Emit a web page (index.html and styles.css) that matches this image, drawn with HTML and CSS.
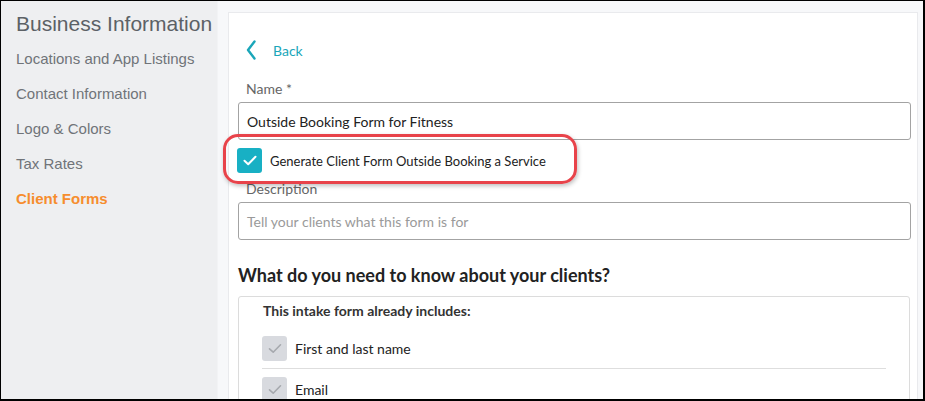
FILE: index.html
```html
<!DOCTYPE html>
<html>
<head>
<meta charset="utf-8">
<link rel="stylesheet" href="styles.css">
</head>
<body>
<div class="frame">
  <aside class="sidebar">
    <div class="side-title">Business Information</div>
    <nav class="side-nav">
      <div class="side-item">Locations and App Listings</div>
      <div class="side-item">Contact Information</div>
      <div class="side-item">Logo &amp; Colors</div>
      <div class="side-item">Tax Rates</div>
      <div class="side-item active">Client Forms</div>
    </nav>
  </aside>
  <main class="main">
    <div class="card">
      <div class="back-row">
        <svg class="chev" width="10" height="20" viewBox="0 0 10 20"><path d="M8.5 1.5 L2 10 L8.5 18.5" fill="none" stroke="#1aa6b9" stroke-width="2.4" stroke-linecap="round" stroke-linejoin="round"/></svg>
        <span class="back-text">Back</span>
      </div>
      <div class="label label-name">Name *</div>
      <div class="input">Outside Booking Form for Fitness</div>
      <div class="check-row">
        <span class="cb cb-on"><svg width="14" height="11" viewBox="0 0 14 11"><path d="M1.5 5.8 L5.2 9.2 L12.5 1.8" fill="none" stroke="#fff" stroke-width="2" stroke-linecap="round" stroke-linejoin="round"/></svg></span>
        <span class="check-text">Generate Client Form Outside Booking a Service</span>
      </div>
      <div class="label label-desc">Description</div>
      <div class="input placeholder">Tell your clients what this form is for</div>
      <h2 class="heading">What do you need to know about your clients?</h2>
      <div class="intake">
        <div class="intake-title">This intake form already includes:</div>
        <div class="intake-row">
          <span class="cb cb-off"><svg width="14" height="11" viewBox="0 0 14 11"><path d="M1.5 5.8 L5.2 9.2 L12.5 1.8" fill="none" stroke="#a6a9ae" stroke-width="1.6" stroke-linecap="round" stroke-linejoin="round"/></svg></span>
          <span class="row-text">First and last name</span>
        </div>
        <div class="intake-row">
          <span class="cb cb-off"><svg width="14" height="11" viewBox="0 0 14 11"><path d="M1.5 5.8 L5.2 9.2 L12.5 1.8" fill="none" stroke="#a6a9ae" stroke-width="1.6" stroke-linecap="round" stroke-linejoin="round"/></svg></span>
          <span class="row-text">Email</span>
        </div>
      </div>
      <div class="highlight"></div>
    </div>
  </main>
</div>
</body>
</html>
```

FILE: styles.css
```css
* { box-sizing: border-box; }
html, body { margin: 0; padding: 0; }
body { width: 925px; height: 401px; overflow: hidden; background: #000; }

.frame {
  width: 925px;
  height: 401px;
  border-top: 1px solid #000;
  border-left: 1px solid #000;
  border-right: 2px solid #000;
  border-bottom: 2px solid #000;
  display: flex;
  overflow: hidden;
  background: #f7f8fa;
}

.sidebar {
  width: 216px;
  flex: none;
  background: #eeeff1;
  padding: 11px 0 0 15px;
  font-family: "Liberation Sans", Arial, sans-serif;
}
.side-title {
  font-size: 21px;
  line-height: 24px;
  color: #5c6166;
  white-space: nowrap;
}
.side-nav { margin-top: 5px; }
.side-item {
  font-size: 15px;
  line-height: 35px;
  height: 35px;
  color: #707479;
}
.side-item.active { color: #f68d2e; font-weight: bold; }

.main {
  flex: 1;
  padding: 11px 5px 0 10px;
  border-left: 1px solid #f2f3f5;
}
.card {
  position: relative;
  background: #fff;
  border: 1px solid #e9eaed;
  border-bottom: none;
  height: 400px;
  padding: 27px 6px 0 9px;
  font-family: Lato, "Open Sans", sans-serif;
  color: #222;
}

.back-row {
  display: flex;
  align-items: center;
  height: 20px;
  padding-left: 8px;
}
.chev { display: block; }
.back-text {
  margin-left: 17px;
  font-size: 14px;
  color: #1aa6b9;
}

.label {
  font-size: 14px;
  line-height: 18px;
  color: #666;
  padding-left: 8px;
}
.label-name { margin-top: 20px; }
.label-desc { margin-top: 7px; }

.input {
  margin-top: 4px;
  height: 38px;
  border: 1px solid #a3a3a3;
  border-radius: 3px;
  padding: 0 8px;
  display: flex;
  align-items: center;
  font-size: 14px;
  color: #222;
}
.input.placeholder { color: #9a9a9a; }

.check-row {
  margin-top: 8px;
  display: flex;
  align-items: center;
  height: 25px;
  margin-left: -1px;
}
.cb {
  width: 25px;
  height: 25px;
  border-radius: 3px;
  display: flex;
  align-items: center;
  justify-content: center;
  flex: none;
}
.cb svg { display: block; }
.cb-on { background: #18b0c4; }
.cb-off { background: #d8dadf; }
.check-text {
  margin-left: 8px;
  font-size: 13px;
  color: #222;
}

.heading {
  margin: 23px 0 0 0;
  font-size: 18px;
  line-height: 24px;
  font-weight: bold;
  color: #222;
}

.intake {
  margin-top: 9px;
  margin-right: 1px;
  border: 1px solid #dcdcdc;
  border-radius: 3px;
  padding: 5px 23px 0 23px;
  height: 200px;
}
.intake-title {
  padding-left: 1px;
  font-size: 14px;
  line-height: 18px;
  font-weight: bold;
  color: #333;
}
.intake-row {
  display: flex;
  align-items: center;
  padding: 8px 0 7px 0;
  border-bottom: 1px solid #dedede;
}
.intake-title + .intake-row { margin-top: 8px; }
.row-text {
  margin-left: 8px;
  font-size: 14px;
  color: #222;
}

.highlight {
  position: absolute;
  left: -6px;
  top: 121px;
  width: 354px;
  height: 50px;
  border: 3px solid #e8434a;
  border-radius: 15px;
  box-shadow: 1px 2px 4px rgba(0,0,0,0.25);
  pointer-events: none;
}
```
